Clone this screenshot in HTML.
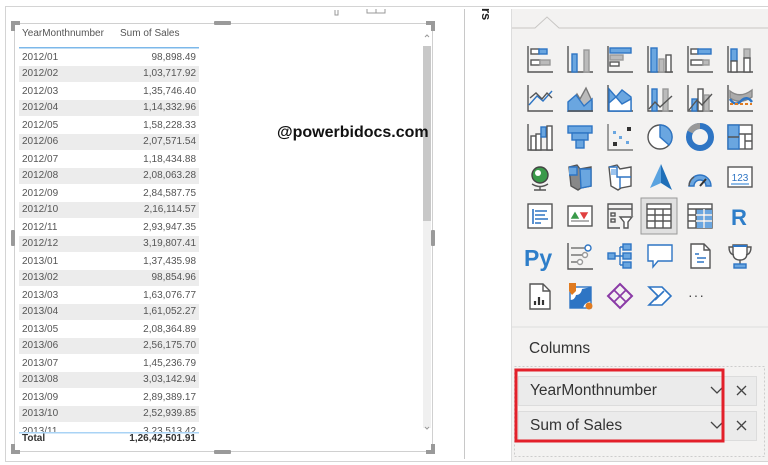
<!DOCTYPE html>
<html><head><meta charset="utf-8">
<style>
*{margin:0;padding:0;box-sizing:border-box}
body{width:768px;height:465px;overflow:hidden;background:#fff;position:relative;font-family:"Segoe UI","Liberation Sans",sans-serif;color:#444}
.abs{position:absolute}
.row{position:absolute;left:19px;width:180px;height:16px;font-size:10px;line-height:16px;color:#555}
.row span{position:absolute;right:3px}
.row b{font-weight:normal;position:absolute;left:3px}
.sh{background:#ececec}
.field{position:absolute;left:518px;width:239px;height:30px;background:#ebebeb;border:1px solid #dcdcdc;font-size:15.5px;line-height:28px;padding-left:11px;color:#333}
</style></head><body>
<!-- outer frame -->
<div class="abs" style="left:5px;top:6px;width:763px;height:456px;border:1px solid #d4d4d4;border-right:none"></div>
<div class="abs" style="left:464px;top:9px;width:1px;height:450px;background:#c8c8c8"></div>
<!-- visual border -->
<div class="abs" style="left:14px;top:23px;width:419px;height:429px;border:1px solid #d0d0d0"></div>
<!-- handles -->
<svg class="abs" style="left:0;top:0" width="768" height="465">
<g fill="#9a9a9a">
<path d="M11 21h9v4h-5v6h-4z"/><path d="M435 21h-9v4h5v6h4z"/>
<path d="M11 454h9v-4h-5v-6h-4z"/><path d="M435 454h-9v-4h5v-6h4z"/>
<rect x="214" y="21" width="17" height="4" rx="1"/><rect x="214" y="450" width="17" height="4" rx="1"/>
<rect x="11" y="230" width="4" height="16" rx="1"/><rect x="431" y="230" width="4" height="16" rx="1"/>
</g>
<path d="M335 10v5h3v-5M367 9v4h18v-4M376 9v4" fill="none" stroke="#999"/>
<!-- scrollbar -->
<rect x="423" y="46" width="8" height="175" fill="#c8c8c8"/>
<rect x="423" y="221" width="8" height="207" fill="#f0f0f0"/>
<path d="M425 37l2-2 2 2M425 427l2 2 2-2" fill="none" stroke="#999"/>
<rect x="19" y="47" width="180" height="1.5" fill="#7cb8ea"/>
<rect x="19" y="432" width="180" height="1.5" fill="#a9d3f5"/>
</svg>
<div class="abs" style="left:22px;top:28px;font-size:10px;color:#555">YearMonthnumber</div>
<div class="abs" style="left:120px;top:28px;font-size:10px;color:#555">Sum of Sales</div>
<div class="abs" style="left:19px;top:50px;width:180px;height:382px;overflow:hidden">
</div>
<div class="abs" style="left:0;top:0;width:200px;height:432px;overflow:hidden">
<div class="row" style="top:50px"><b>2012/01</b><span>98,898.49</span></div>
<div class="row sh" style="top:66px"><b>2012/02</b><span>1,03,717.92</span></div>
<div class="row" style="top:84px"><b>2012/03</b><span>1,35,746.40</span></div>
<div class="row sh" style="top:100px"><b>2012/04</b><span>1,14,332.96</span></div>
<div class="row" style="top:118px"><b>2012/05</b><span>1,58,228.33</span></div>
<div class="row sh" style="top:134px"><b>2012/06</b><span>2,07,571.54</span></div>
<div class="row" style="top:152px"><b>2012/07</b><span>1,18,434.88</span></div>
<div class="row sh" style="top:168px"><b>2012/08</b><span>2,08,063.28</span></div>
<div class="row" style="top:186px"><b>2012/09</b><span>2,84,587.75</span></div>
<div class="row sh" style="top:202px"><b>2012/10</b><span>2,16,114.57</span></div>
<div class="row" style="top:220px"><b>2012/11</b><span>2,93,947.35</span></div>
<div class="row sh" style="top:236px"><b>2012/12</b><span>3,19,807.41</span></div>
<div class="row" style="top:254px"><b>2013/01</b><span>1,37,435.98</span></div>
<div class="row sh" style="top:270px"><b>2013/02</b><span>98,854.96</span></div>
<div class="row" style="top:288px"><b>2013/03</b><span>1,63,076.77</span></div>
<div class="row sh" style="top:304px"><b>2013/04</b><span>1,61,052.27</span></div>
<div class="row" style="top:322px"><b>2013/05</b><span>2,08,364.89</span></div>
<div class="row sh" style="top:338px"><b>2013/06</b><span>2,56,175.70</span></div>
<div class="row" style="top:356px"><b>2013/07</b><span>1,45,236.79</span></div>
<div class="row sh" style="top:372px"><b>2013/08</b><span>3,03,142.94</span></div>
<div class="row" style="top:390px"><b>2013/09</b><span>2,89,389.17</span></div>
<div class="row sh" style="top:406px"><b>2013/10</b><span>2,52,939.85</span></div>
<div class="row" style="top:424px"><b>2013/11</b><span>3,23,513.42</span></div>
</div>
<div class="abs" style="left:22px;top:433px;font-size:10px;font-weight:bold;color:#333">Total</div>
<div class="abs" style="left:100px;top:433px;width:96px;text-align:right;font-size:10px;font-weight:bold;color:#333">1,26,42,501.91</div>
<div class="abs" style="left:277px;top:124px;font-size:16px;font-weight:bold;color:#111;font-family:'Liberation Sans',sans-serif">@powerbidocs.com</div>
<div class="abs" style="left:480px;top:8px;font-size:13px;font-weight:bold;color:#222;transform:rotate(90deg);transform-origin:left top;left:494px">rs</div>

<!-- right panel -->
<div class="abs" style="left:511px;top:9px;width:257px;height:452px;background:#f3f2f1;border-left:1px solid #ddd"></div>
<svg class="abs" style="left:0;top:0" width="768" height="465">
<path d="M512 28H535L547 17L559 28H768" fill="none" stroke="#c8c6c4"/>
<line x1="512" y1="327" x2="768" y2="327" stroke="#ddd"/>
<g fill="none" stroke="#555" stroke-width="1.4">
<!-- row1 -->
<g transform="translate(527,46)"><path d="M1 0V26H26"/><rect x="4" y="3" width="8" height="5" fill="#fff"/><rect x="12" y="3" width="8" height="5" fill="#6aa6e0" stroke="#2e75c4"/><rect x="4" y="14" width="9" height="5" fill="#fff"/><rect x="13" y="14" width="10" height="5" fill="#bbb" stroke="#999"/></g>
<g transform="translate(567,46)"><path d="M1 0V26H26"/><rect x="5" y="8" width="5" height="18" fill="#6aa6e0" stroke="#2e75c4"/><rect x="10" y="4" width="0" height="0"/><rect x="17" y="4" width="5" height="22" fill="#bbb" stroke="#999"/></g>
<g transform="translate(607,46)"><path d="M1 0V26H26"/><rect x="3" y="2" width="21" height="5" fill="#6aa6e0" stroke="#2e75c4"/><rect x="3" y="9" width="13" height="5" fill="#bbb" stroke="#999"/><rect x="3" y="16" width="9" height="4" fill="#fff"/></g>
<g transform="translate(647,46)"><path d="M1 0V26H26"/><rect x="4" y="2" width="6" height="24" fill="#6aa6e0" stroke="#2e75c4"/><rect x="12" y="13" width="5" height="13" fill="#bbb" stroke="#999"/><rect x="19" y="9" width="5" height="17" fill="#fff"/></g>
<g transform="translate(687,46)"><path d="M1 0V26H26"/><rect x="4" y="3" width="7" height="5" fill="#fff"/><rect x="11" y="3" width="13" height="5" fill="#6aa6e0" stroke="#2e75c4"/><rect x="4" y="14" width="12" height="5" fill="#fff"/><rect x="16" y="14" width="6" height="5" fill="#bbb" stroke="#999"/></g>
<g transform="translate(727,46)"><path d="M1 0V26H26"/><rect x="4" y="3" width="6" height="12" fill="#6aa6e0" stroke="#2e75c4"/><rect x="4" y="15" width="6" height="11" fill="#fff"/><rect x="17" y="3" width="6" height="9" fill="#bbb" stroke="#999"/><rect x="17" y="12" width="6" height="14" fill="#fff"/></g>
<!-- row2 -->
<g transform="translate(527,85)"><path d="M1 0V26H26"/><path d="M2 20L10 11L16 16L25 6" stroke="#2e75c4"/><path d="M3 13L9 8L15 14L20 8L25 13" stroke="#555"/></g>
<g transform="translate(567,85)"><path d="M1 26L10 9L13 14L19 3L25 16V26Z" fill="#bbb" stroke="#777"/><path d="M1 26V17L9 10L17 21L25 14V26Z" fill="#6aa6e0" stroke="#2e75c4"/><path d="M1 26H26"/></g>
<g transform="translate(607,85)"><path d="M1 0V26H26"/><path d="M2 4L9 12L15 5L24 12V26H2Z" fill="#6aa6e0" stroke="#2e75c4"/><path d="M2 18L9 12L15 19L24 14V26H2Z" fill="#fff" stroke="#2e75c4"/></g>
<g transform="translate(647,85)"><path d="M1 0V26H26"/><rect x="5" y="4" width="5" height="22" fill="#6aa6e0" stroke="#2e75c4"/><rect x="16" y="4" width="5" height="22" fill="#bbb" stroke="#999"/><path d="M2 24L8 17L13 22L25 11"/></g>
<g transform="translate(687,85)"><path d="M1 0V26H26"/><rect x="5" y="14" width="5" height="12" fill="#6aa6e0" stroke="#2e75c4"/><rect x="11" y="4" width="5" height="22" fill="#fff"/><rect x="17" y="10" width="5" height="16" fill="#bbb" stroke="#999"/><path d="M2 25L10 15L15 20L25 9"/></g>
<g transform="translate(727,85)"><path d="M1 0V26H26"/><path d="M3 6Q13 14 25 5V12Q13 20 3 13Z" fill="#aaa" stroke="#888"/><path d="M3 14Q8 22 14 16Q20 10 25 17" stroke="#2e75c4" stroke-width="2.5"/><path d="M3 19H25" stroke="#e07b20" stroke-width="2" stroke-dasharray="3 2"/></g>
<!-- row3 -->
<g transform="translate(527,124)"><path d="M1 0V26H26"/><rect x="4" y="12" width="5" height="14" fill="#fff"/><rect x="9" y="10" width="5" height="16" fill="#fff"/><rect x="14" y="3" width="5" height="10" fill="#6aa6e0" stroke="#2e75c4"/><rect x="20" y="2" width="5" height="24" fill="#fff"/></g>
<g transform="translate(567,124)"><rect x="1" y="2" width="24" height="7" fill="#6aa6e0" stroke="#2e75c4"/><rect x="5" y="9" width="16" height="7" fill="#6aa6e0" stroke="#2e75c4"/><rect x="9" y="16" width="8" height="8" fill="#6aa6e0" stroke="#2e75c4"/></g>
<g transform="translate(607,124)"><path d="M1 0V26H26" stroke="#777"/><rect x="6" y="7" width="3" height="3" fill="#6aa6e0" stroke="none"/><rect x="12" y="12" width="3" height="3" fill="#6aa6e0" stroke="none"/><rect x="6" y="18" width="4" height="4" fill="#333" stroke="none"/><rect x="20" y="3" width="4" height="4" fill="#333" stroke="none"/><rect x="19" y="17" width="3" height="3" fill="#6aa6e0" stroke="none"/></g>
<g transform="translate(647,124)"><circle cx="13" cy="13" r="12" fill="#fff"/><path d="M13 13V1A12 12 0 0 1 22 21Z" fill="#6aa6e0" stroke="#2e75c4"/></g>
<g transform="translate(687,124)"><circle cx="13" cy="13" r="11" stroke="#2e75c4" stroke-width="6" fill="none"/><path d="M13 2A11 11 0 0 0 3 8" stroke="#999" stroke-width="6"/></g>
<g transform="translate(727,124)"><rect x="1" y="1" width="24" height="24" fill="#fff"/><rect x="1" y="1" width="11" height="24" fill="#6aa6e0" stroke="#2e75c4"/><path d="M1 13H12M12 10H25M18 10V25M18 17H25"/></g>
<!-- row4 -->
<g transform="translate(527,164)"><circle cx="13" cy="11" r="8" fill="#3a9a4a" stroke="#444"/><circle cx="11" cy="9" r="3" fill="#fff" stroke="none"/><path d="M5 20Q13 25 21 20M13 22V26M7 26H19"/></g>
<g transform="translate(567,164)"><path d="M2 3L10 1L13 5L24 3V22L14 24L11 26L4 22Z" fill="#888" stroke="#555"/><path d="M13 5H24V22L14 24Z" fill="#6aa6e0" stroke="#2e75c4"/><path d="M2 3L10 3V11H2" fill="#6aa6e0" stroke="#2e75c4"/></g>
<g transform="translate(607,164)"><path d="M2 3L10 1L13 5L24 3V22L14 24L11 26L4 22Z" fill="#fff" stroke="#555"/><path d="M2 3H10V13H24M13 13V24" stroke="#2e75c4"/><path d="M4 5H9V11H4Z" fill="#9cc4ee" stroke="none"/></g>
<g transform="translate(647,164)"><path d="M14 0L3 24L14 19Z" fill="#5aa3e0" stroke="none"/><path d="M14 0L25 26L14 19Z" fill="#1f6fb8" stroke="none"/></g>
<g transform="translate(687,164)"><path d="M2 22A11 11 0 0 1 24 22H19A6 6 0 0 0 7 22Z" fill="#6aa6e0" stroke="#2e75c4"/><path d="M13 22L19 15" stroke="#333" stroke-width="2"/><path d="M2 22A11 11 0 0 1 7 13" stroke="#555"/></g>
<g transform="translate(727,164)"><rect x="1" y="3" width="24" height="20" fill="#fff"/><text x="13" y="17" font-size="10" text-anchor="middle" fill="#2e75c4" stroke="none" font-family="Liberation Sans">123</text><path d="M4 20H22" stroke="#6aa6e0"/></g>
<!-- row5 -->
<g transform="translate(527,203)"><rect x="1" y="1" width="24" height="24" fill="#fff"/><path d="M6 6V21M8 8H20M8 12H18M8 16H21M8 20H14" stroke="#2e75c4" stroke-width="1.6"/></g>
<g transform="translate(567,203)"><rect x="1" y="3" width="24" height="20" fill="#fff"/><path d="M5 15L8 10L11 15Z" fill="#3a9a4a" stroke="#3a9a4a"/><path d="M14 10H20L17 15Z" fill="#e04040" stroke="#e04040"/><path d="M4 18H22" stroke="#999"/></g>
<g transform="translate(607,203)"><path d="M25 13V1H1V25H13"/><path d="M1 6H25"/><rect x="4" y="10" width="4" height="3"/><rect x="4" y="16" width="4" height="3"/><path d="M13 14H25L21 19V25H17V19Z" fill="#fff"/></g>
<g transform="translate(641,198)"><rect x="0" y="0" width="36" height="36" fill="#e0e0e0" stroke="#999" stroke-width="1"/><g transform="translate(5,5)"><rect x="1" y="1" width="24" height="24" fill="#fff"/><path d="M1 6H25M1 12H25M1 18H25M9 6V25M17 6V25"/></g></g>
<g transform="translate(687,203)"><rect x="1" y="1" width="24" height="24" fill="#fff"/><rect x="9" y="6" width="16" height="19" fill="#6aa6e0" stroke="none"/><path d="M1 6H25M1 12H25M1 18H25M9 6V25M17 6V25" stroke="#555"/><path d="M9 12H25M9 18H25M17 6V25" stroke="#fff"/></g>
<text x="731" y="225" font-size="22" font-weight="bold" fill="#2e7ec9" stroke="none" font-family="Liberation Sans">R</text>
<!-- row6 -->
<text x="524" y="266" font-size="23" font-weight="bold" fill="#2e7ec9" stroke="none" font-family="Liberation Sans">Py</text>
<g transform="translate(567,243)"><path d="M1 0V26H26"/><path d="M4 5H18M4 12H15M4 19H10" stroke="#777"/><circle cx="21" cy="5" r="3" fill="#fff" stroke="#2e75c4"/><circle cx="18" cy="12" r="2.5" fill="#fff" stroke="#999"/><circle cx="13" cy="19" r="2.5" fill="#fff" stroke="#999"/></g>
<g transform="translate(607,243)" stroke="#2e75c4"><rect x="1" y="10" width="7" height="6" fill="#6aa6e0"/><path d="M8 13H13M13 4V22M13 4H16M13 13H16M13 22H16"/><rect x="16" y="1" width="8" height="6" fill="#6aa6e0"/><rect x="16" y="10" width="8" height="6" fill="#6aa6e0"/><rect x="16" y="19" width="8" height="6" fill="#6aa6e0"/></g>
<g transform="translate(647,243)" stroke="#2e75c4"><path d="M1 2H25V18H11L6 24V18H1Z" fill="#fff"/></g>
<g transform="translate(687,243)"><path d="M4 1H17L23 7V25H4Z" fill="#fff"/><path d="M17 1V7H23"/><path d="M8 11H12M10 15H19M10 19H17" stroke="#2e75c4"/></g>
<g transform="translate(727,243)"><path d="M6 2H20V10Q20 17 13 17Q6 17 6 10Z" fill="#fff"/><path d="M6 4H2Q2 11 7 12M20 4H24Q24 11 19 12M13 17V21"/><rect x="7" y="21" width="12" height="4" fill="#6aa6e0" stroke="#2e75c4"/><path d="M6 3H20" stroke="#2e75c4" stroke-width="2"/></g>
<!-- row7 -->
<g transform="translate(527,283)"><path d="M3 1H16L23 8V26H3Z" fill="#fff"/><path d="M16 1V8H23"/><path d="M8 22V18M12 22V14M16 22V17" stroke="#333" stroke-width="2.2"/></g>
<g transform="translate(567,283)"><rect x="3" y="4" width="21" height="21" fill="#fff" stroke="#2e75c4"/><path d="M9 12Q14 12 15 6L24 4V18Q17 20 16 25H3V17Q8 17 9 12Z" fill="#2e75c4" stroke="none"/><path d="M2 0H9V8L5 12L2 8Z" fill="#e07b20" stroke="none"/><circle cx="22" cy="23" r="3.5" fill="#e07b20" stroke="none"/></g>
<g transform="translate(607,283)" stroke="#8a3aa6" stroke-width="2"><path d="M13 1L25 13L13 25L1 13Z"/><path d="M7 7L19 19M19 7L7 19" stroke-width="1.6"/></g>
<g transform="translate(647,283)" stroke="#2e75c4" stroke-width="1.6"><path d="M2 4H15L24 13L15 22H2L11 13Z" fill="#fff"/><path d="M8 17L17 8" /></g>
<text x="688" y="300" font-size="14" fill="#444" stroke="none" font-family="Liberation Sans" letter-spacing="1">···</text>
</g>
<!-- columns drop area -->
<rect x="514.5" y="366.5" width="250" height="90" fill="none" stroke="#ccc" stroke-dasharray="2 2"/>
</svg>
<div class="abs" style="left:529px;top:340px;font-size:15.5px;color:#333">Columns</div>
<div class="field" style="top:376px">YearMonthnumber</div>
<div class="field" style="top:411px">Sum of Sales</div>
<svg class="abs" style="left:0;top:0" width="768" height="465">
<g fill="none" stroke="#444" stroke-width="1.3">
<path d="M711 387l6 6 6-6M711 422l6 6 6-6"/>
<path d="M737 386l9 9M746 386l-9 9M737 421l9 9M746 421l-9 9"/>
</g>
<rect x="516" y="370" width="207" height="71" fill="none" stroke="#e3202a" stroke-width="3"/>
</svg>
</body></html>
